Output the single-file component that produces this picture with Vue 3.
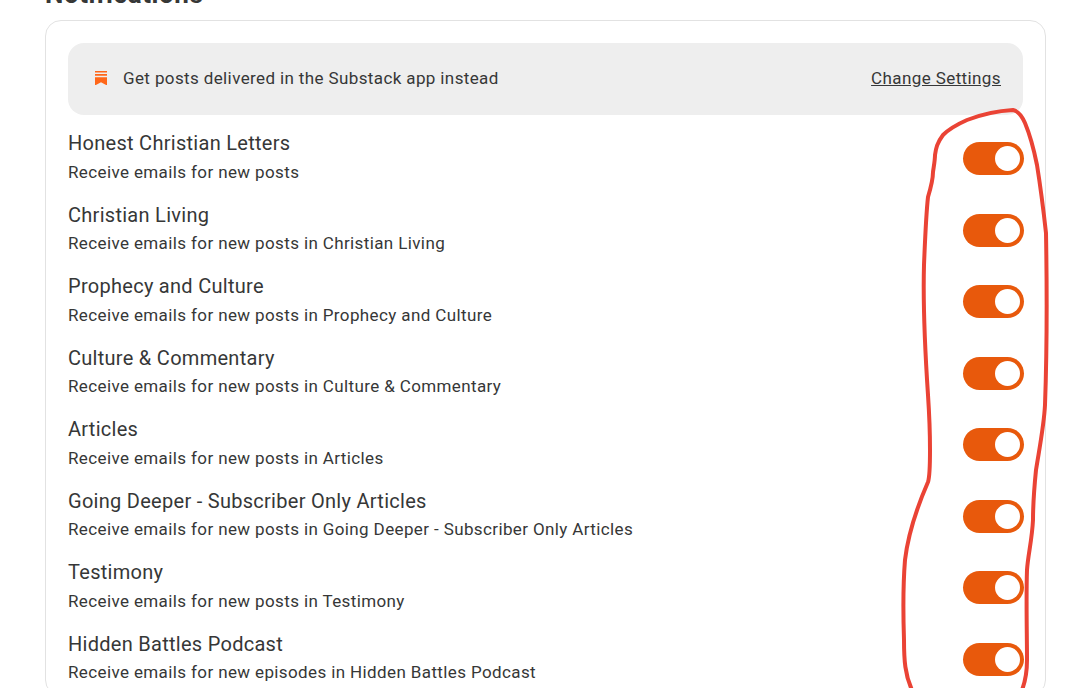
<template>
  <div class="settings-page">
    <h2 class="section-title">Notifications</h2>
    <div class="card">
      <div class="app-banner">
        <svg class="banner-icon" viewBox="0 0 12 14.5" width="12" height="14.5">
          <path d="M0 0h12v1.6H0zM0 3.1h12v1.6H0zM0 6.2h12v8.3L6 11.2l-6 3.3z" fill="#FF6719"/>
        </svg>
        <span class="banner-text">Get posts delivered in the Substack app instead</span>
        <a class="banner-link">Change Settings</a>
      </div>
      <div class="row" v-for="r in rows" :key="r.name">
        <div class="row-info">
          <div class="row-name">{{ r.name }}</div>
          <div class="row-desc">{{ r.desc }}</div>
        </div>
        <div class="toggle"><span class="knob"></span></div>
      </div>
    </div>
    <!-- hand drawn circle around the toggles -->
    <svg class="scribble" viewBox="0 0 1081 688" width="1081" height="688" fill="none" stroke="#EA4335" stroke-width="4" stroke-linecap="round" stroke-linejoin="round">
      <path d="M912 690C905 675 904 660 904 640C903 610 903 585 905 560C908 535 918 505 928 482C930 476 930 465 930 450C930 425 929 410 928 395C925 350 923 300 924 265C925 240 926 215 928 197C931 187 933 180 933 172C934 165 935 160 935 155C936 148 937 143 943 135C950 128 958 124 967 120C980 115 995 111 1013 110C1018 111 1022 116 1025 123C1030 135 1034 150 1037 165C1041 190 1044 215 1046 233C1047 290 1047 350 1045 405C1044 425 1040 445 1036 470C1034 490 1033 505 1033 520C1032 540 1028 555 1027 570C1026 600 1027 635 1027 660C1027 672 1025 682 1022 690"/>
    </svg>
  </div>
</template>
<script setup>
const names = ['Christian Living', 'Prophecy and Culture', 'Culture & Commentary', 'Articles', 'Going Deeper - Subscriber Only Articles', 'Testimony']
const rows = [
  { name: 'Honest Christian Letters', desc: 'Receive emails for new posts' },
  ...names.map(n => ({ name: n, desc: 'Receive emails for new posts in ' + n })),
  { name: 'Hidden Battles Podcast', desc: 'Receive emails for new episodes in Hidden Battles Podcast' },
]
</script>
<style>
html, body { margin: 0; background: #fff; overflow: hidden; }
</style>
<style scoped>
.settings-page { position: relative; height: 688px; overflow: hidden; background: #fff; color: #363737; font-family: Roboto, "Liberation Sans", sans-serif; padding-left: 45px; box-sizing: border-box; }
.section-title { margin: -20px 0 12px; font-size: 26px; line-height: 28px; font-weight: 700; letter-spacing: 0.6px; }
.card { width: 1001px; box-sizing: border-box; border: 1px solid #e2e2e2; border-radius: 16px; padding: 22px 22px 0; }
.app-banner { display: flex; align-items: center; height: 72px; background: #eee; border-radius: 16px; padding: 0 22px 2px 27px; box-sizing: border-box; margin-bottom: 8px; }
.banner-icon { flex: none; margin-right: 16px; }
.banner-text { flex: 1; font-size: 17px; letter-spacing: 0.38px; }
.banner-link { font-size: 17px; letter-spacing: 0.4px; text-decoration: underline; }
.row { display: flex; align-items: center; justify-content: space-between; height: 71.5px; }
.row-info { padding-bottom: 5px; }
.row-name { font-size: 20px; line-height: 28px; letter-spacing: 0.28px; }
.row-desc { font-size: 17px; line-height: 24px; margin-top: 2.5px; letter-spacing: 0.38px; }
.toggle { width: 61px; height: 33px; margin-right: -1px; border-radius: 17px; background: #E8590C; display: flex; align-items: center; justify-content: flex-end; padding-right: 4px; box-sizing: border-box; }
.knob { width: 25px; height: 25px; border-radius: 50%; background: #fff; }
.scribble { position: absolute; left: 0; top: 0; pointer-events: none; }
</style>
